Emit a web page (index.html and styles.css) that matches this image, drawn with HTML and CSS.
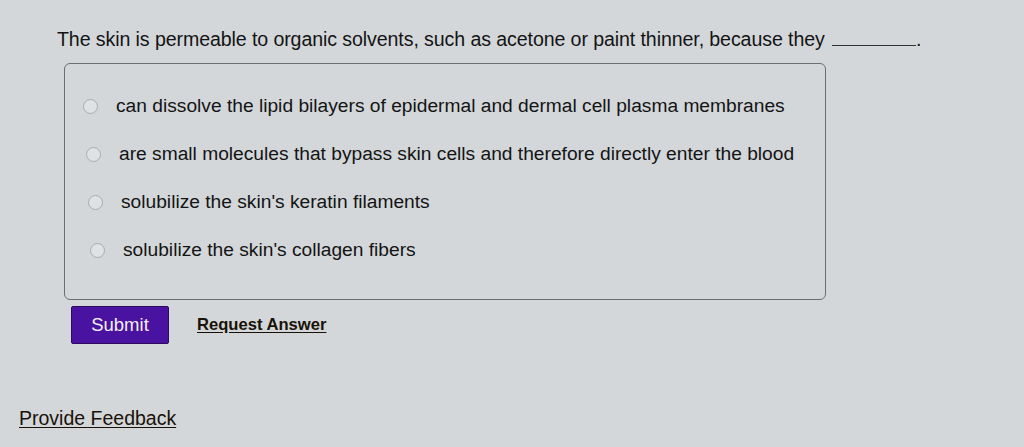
FILE: index.html
```html
<!DOCTYPE html>
<html>
<head>
<meta charset="utf-8">
<link rel="stylesheet" href="styles.css">
</head>
<body>
<div class="page">
  <p class="question">The skin is permeable to organic solvents, such as acetone or paint thinner, because they <span class="blank"></span>.</p>
  <div class="options">
    <label class="option"><span class="radio"></span><span class="otext">can dissolve the lipid bilayers of epidermal and dermal cell plasma membranes</span></label>
    <label class="option"><span class="radio"></span><span class="otext">are small molecules that bypass skin cells and therefore directly enter the blood</span></label>
    <label class="option"><span class="radio"></span><span class="otext">solubilize the skin's keratin filaments</span></label>
    <label class="option"><span class="radio"></span><span class="otext">solubilize the skin's collagen fibers</span></label>
  </div>
  <div class="actions">
    <button class="submit">Submit</button>
    <a class="request" href="#">Request Answer</a>
  </div>
  <a class="feedback" href="#">Provide Feedback</a>
</div>
</body>
</html>
```
FILE: styles.css
```css
html, body {
  margin: 0;
  padding: 0;
}
body {
  background: #d3d7da;
  font-family: "Liberation Sans", Arial, sans-serif;
  color: #141414;
  width: 1024px;
  height: 447px;
  overflow: hidden;
}
.page {
  padding: 27px 0 0 19px;
}
.question {
  margin: 0 0 0 38px;
  font-size: 19.6px;
  line-height: 24px;
  letter-spacing: -0.1px;
}
.blank {
  display: inline-block;
  width: 84px;
  border-bottom: 1px solid #333;
  margin-left: 2px;
  vertical-align: baseline;
}
.options {
  margin: 12px 0 0 45px;
  width: 762px;
  height: 237px;
  border: 1.5px solid #6b6e70;
  border-radius: 6px;
  box-sizing: border-box;
  padding: 30px 0 0 18px;
  display: flex;
  flex-direction: column;
  gap: 24px;
}
.option {
  display: flex;
  align-items: center;
  gap: 18px;
  font-size: 19.2px;
  line-height: 24px;
}
.option:nth-child(2) { margin-left: 3px; }
.option:nth-child(3) { margin-left: 5px; }
.option:nth-child(4) { margin-left: 7px; }
.radio {
  width: 13px;
  height: 13px;
  border: 1px solid #a9adb0;
  border-radius: 50%;
  background: #dfe2e4;
  flex: none;
}
.actions {
  margin: 6px 0 0 52px;
  display: flex;
  align-items: center;
  gap: 28px;
}
.submit {
  background: #4a12a0;
  color: #f2f0f6;
  border: 1px solid #2c0a60;
  border-radius: 2px;
  font-family: "Liberation Sans", Arial, sans-serif;
  font-size: 18.5px;
  width: 98px;
  height: 38px;
  padding: 0;
}
.request {
  color: #1a1208;
  font-weight: bold;
  font-size: 16.6px;
  text-decoration: underline;
  text-underline-offset: 2px;
}
.feedback {
  display: inline-block;
  margin-top: 63px;
  color: #1a1208;
  font-size: 19.5px;
  text-decoration: underline;
  text-underline-offset: 2px;
}
```
